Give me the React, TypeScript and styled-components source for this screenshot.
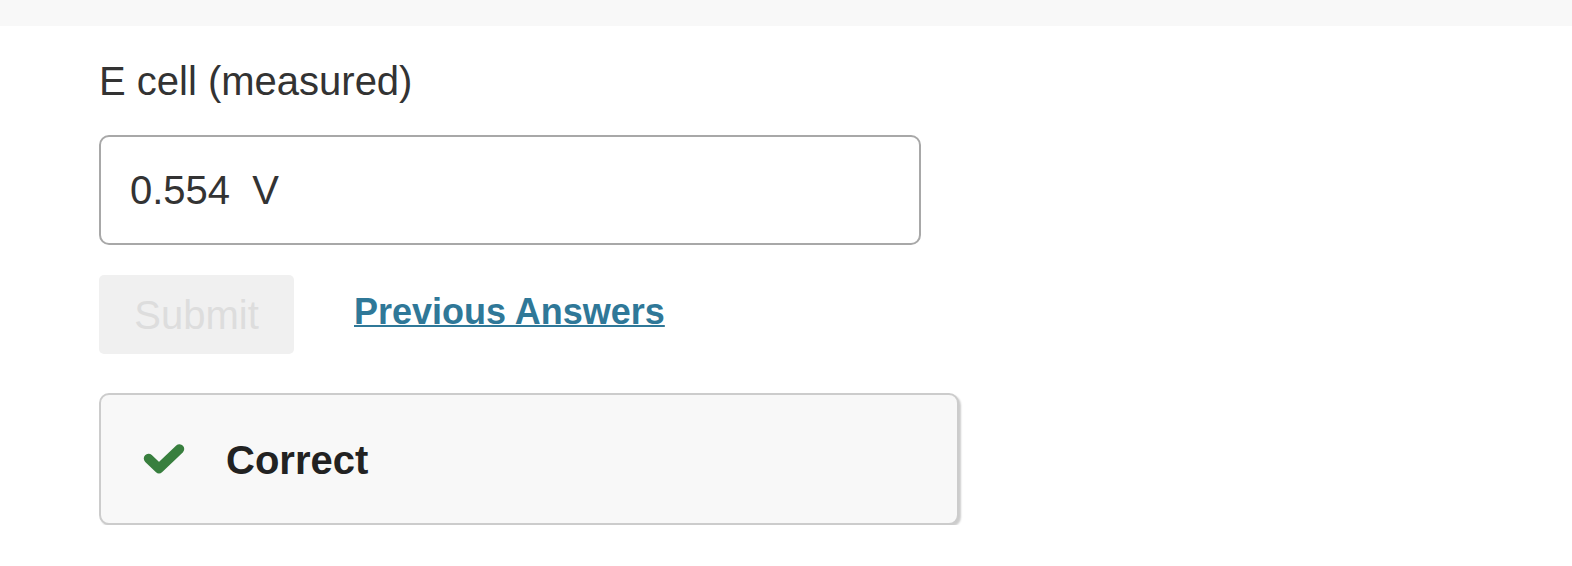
import styled, { createGlobalStyle } from "styled-components";

const GlobalStyle = createGlobalStyle`
  html, body {
    margin: 0;
    padding: 0;
    background: #ffffff;
    font-family: "Liberation Sans", Arial, Helvetica, sans-serif;
  }
`;

// Styled Components
const TopBand = styled.div`
  height: 26px;
  background-color: #f8f8f8;
`;

const Content = styled.div`
  padding: 32px 0 0 99px;
  display: flex;
  flex-direction: column;
  align-items: flex-start;
`;

const Label = styled.label`
  font-size: 40px;
  line-height: 46px;
  color: #333333;
`;

const AnswerBox = styled.div`
  margin-top: 31px;
  box-sizing: border-box;
  width: 822px;
  height: 110px;
  border: 2px solid #a8a8a8;
  border-radius: 10px;
  padding: 0 29px;
  display: flex;
  align-items: center;
  font-size: 40px;
  line-height: 46px;
  color: #333333;
  white-space: pre;
`;

const Actions = styled.div`
  margin-top: 30px;
  display: flex;
  align-items: center;
  gap: 60px;
`;

const Button = styled.button<{ $disabled?: boolean }>`
  box-sizing: border-box;
  height: 79px;
  width: 195px;
  padding: 0;
  border: none;
  border-radius: 5px;
  background-color: #f0f0f0;
  color: ${(p) => (p.$disabled ? "#dddddd" : "#333333")};
  font-family: inherit;
  font-size: 40px;
  line-height: 46px;
  cursor: ${(p) => (p.$disabled ? "default" : "pointer")};
`;

const Link = styled.a`
  font-size: 36px;
  line-height: 36px;
  font-weight: bold;
  color: #2f7898;
  text-decoration: underline;
  text-decoration-thickness: 2px;
  margin-bottom: 6px;
  cursor: pointer;
`;

const Feedback = styled.div`
  margin-top: 39px;
  box-sizing: border-box;
  width: 860px;
  height: 132px;
  border: 2px solid #cccccc;
  border-radius: 10px;
  background-color: #f8f8f8;
  box-shadow: 2px 2px 2px rgba(0, 0, 0, 0.2);
  padding: 0 0 0 42px;
  display: flex;
  align-items: center;
  gap: 41px;
`;

const FeedbackText = styled.span`
  font-size: 40px;
  font-weight: bold;
  color: #222222;
  margin-top: 2px;
`;

const CheckIcon = () => (
  <svg width="42" height="32" viewBox="0 0 42 32">
    <polyline
      points="5.5,15.5 16,25.5 36.5,6"
      fill="none"
      stroke="#387f3e"
      strokeWidth="9.5"
      strokeLinecap="round"
      strokeLinejoin="round"
    />
  </svg>
);

export default function App() {
  return (
    <>
      <GlobalStyle />
      <TopBand />
      <Content>
        <Label>E cell (measured)</Label>
        <AnswerBox>0.554  V</AnswerBox>
        <Actions>
          <Button $disabled disabled>
            Submit
          </Button>
          <Link>Previous Answers</Link>
        </Actions>
        <Feedback>
          <CheckIcon />
          <FeedbackText>Correct</FeedbackText>
        </Feedback>
      </Content>
    </>
  );
}
